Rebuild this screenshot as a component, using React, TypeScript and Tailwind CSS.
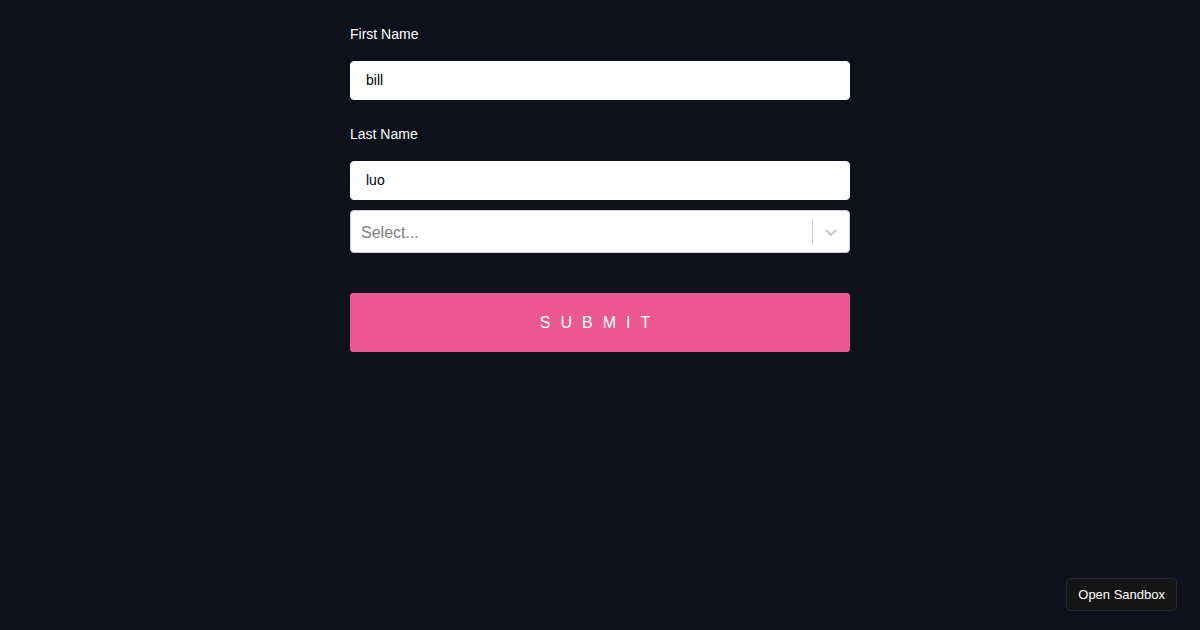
export default function App() {
  return (
    <div className="relative w-full h-[630px] bg-[#0e101c] font-['Liberation_Sans',Arial,sans-serif] overflow-hidden">
      <form className="w-[500px] mx-auto pt-5 flex flex-col">
        <label className="block text-white text-[14px] leading-[28px] font-extralight mb-[13px]">First Name</label>
        <div className="h-[39px] bg-white rounded border border-white px-[15px] flex items-center text-[14px] text-black">bill</div>

        <label className="block text-white text-[14px] leading-[28px] font-extralight mt-[20px] mb-[13px]">Last Name</label>
        <div className="h-[39px] bg-white rounded border border-white px-[15px] flex items-center text-[14px] text-black">luo</div>

        {/* react-select style */}
        <div className="mt-[10px] h-[43px] bg-white rounded border border-[#cccccc] flex items-center">
          <div className="flex-1 pl-[10px] pt-[2px] text-[16px] text-[#808080]">Select...</div>
          <div className="w-px h-[25px] bg-[#cccccc]"></div>
          <div className="w-[36px] flex justify-center text-[#cccccc]">
            <svg width="20" height="20" viewBox="0 0 20 20" fill="currentColor">
              <path d="M4.516 7.548c0.436-0.446 1.043-0.481 1.576 0l3.908 3.747 3.908-3.747c0.533-0.481 1.141-0.446 1.574 0 0.436 0.445 0.408 1.197 0 1.615-0.406 0.418-4.695 4.502-4.695 4.502-0.217 0.223-0.502 0.335-0.787 0.335s-0.57-0.112-0.789-0.335c0 0-4.287-4.084-4.695-4.502s-0.436-1.17 0-1.615z" />
            </svg>
          </div>
        </div>

        <button type="button" className="mt-[40px] h-[59px] bg-[#ec5990] text-white text-[16px] font-thin uppercase tracking-[10px] rounded-[3px] flex items-center justify-center">
          Submit
        </button>
      </form>

      <div className="absolute right-[23px] bottom-[19px] h-[33px] px-[11px] flex items-center bg-[#151515] border border-[#2a2a2a] rounded text-[13px] text-white">
        Open Sandbox
      </div>
    </div>
  );
}
